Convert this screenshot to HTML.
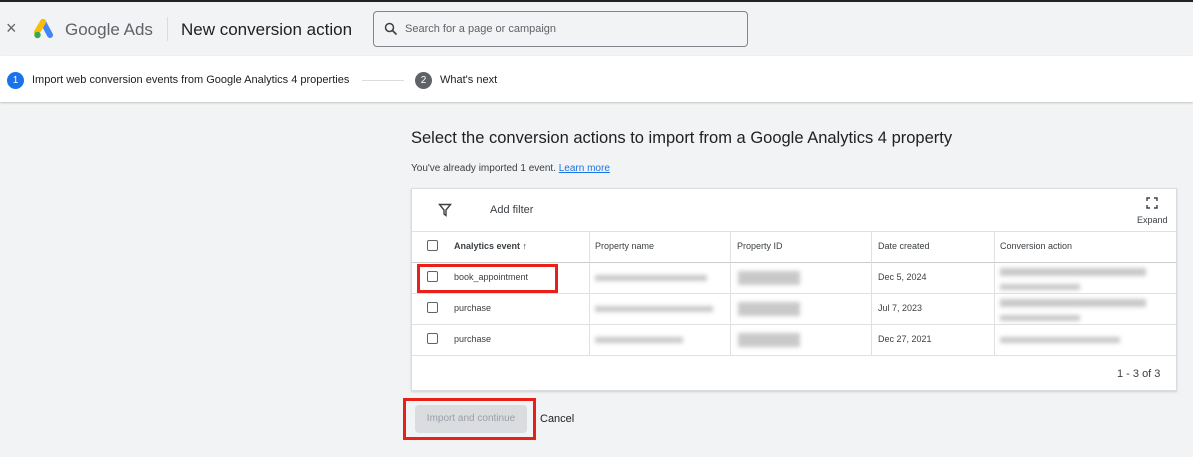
<!DOCTYPE html>
<html><head><meta charset="utf-8"><style>
*{box-sizing:border-box;margin:0;padding:0}
body{width:1193px;height:457px;overflow:hidden;background:#f1f3f4;font-family:"Liberation Sans",Arial,sans-serif;color:#202124;position:relative}
.a{position:absolute}
.top{left:0;top:0;width:1193px;height:2px;background:#222}
.step{left:0;top:56px;width:1193px;height:46px;background:#fff;box-shadow:0 1px 2px rgba(0,0,0,.2)}
.t{font-size:10px;color:#3c4043;white-space:nowrap}
.blur{background:#bbb;filter:blur(2px);height:6px;opacity:.8}
.cb{width:11px;height:11px;border:1.5px solid #5f6368;border-radius:2px}
.hl{background:#e0e0e0;height:1px}
.vl{background:#e0e0e0;width:1px}
</style></head><body>
<div class="a top"></div>
<div class="a" style="left:6px;top:18px;font-size:18px;color:#5f6368">×</div>
<svg class="a" style="left:33px;top:18px" width="22" height="22" viewBox="0 0 22 22"><path d="M10 4 L17 17" stroke="#4285f4" stroke-width="6" stroke-linecap="round"/><path d="M10 4 L4 14" stroke="#fbbc04" stroke-width="6" stroke-linecap="round"/><circle cx="4.5" cy="17" r="3.2" fill="#34a853"/></svg>
<div class="a" style="left:65px;top:20px;font-size:17px;color:#5f6368">Google Ads</div>
<div class="a" style="left:167px;top:17px;width:1px;height:24px;background:#dadce0"></div>
<div class="a" style="left:181px;top:20px;font-size:17px;color:#202124">New conversion action</div>
<div class="a" style="left:373px;top:11px;width:375px;height:36px;border:1px solid #80868b;border-radius:4px;background:#f1f3f4"></div>
<svg class="a" style="left:384px;top:22px" width="14" height="14" viewBox="0 0 14 14"><circle cx="5.5" cy="5.5" r="4" fill="none" stroke="#3c4043" stroke-width="1.5"/><path d="M8.5 8.5 L12.5 12.5" stroke="#3c4043" stroke-width="1.6"/></svg>
<div class="a t" style="left:405px;top:23px;font-size:11px;color:#5f6368">Search for a page or campaign</div>
<div class="a step"></div>
<div class="a" style="left:7px;top:72px;width:17px;height:17px;border-radius:50%;background:#1a73e8;color:#fff;font-size:10px;text-align:center;line-height:17px">1</div>
<div class="a t" style="left:32px;top:74px;color:#202124;font-size:11px">Import web conversion events from Google Analytics 4 properties</div>
<div class="a" style="left:362px;top:80px;width:42px;height:1px;background:#dadce0"></div>
<div class="a" style="left:415px;top:72px;width:17px;height:17px;border-radius:50%;background:#5f6368;color:#fff;font-size:10px;text-align:center;line-height:17px">2</div>
<div class="a t" style="left:440px;top:74px;color:#202124;font-size:11px">What's next</div>
<div class="a" style="left:411px;top:129px;font-size:16.5px;color:#202124">Select the conversion actions to import from a Google Analytics 4 property</div>
<div class="a t" style="left:411px;top:163px">You've already imported 1 event. <span style="color:#1a73e8;text-decoration:underline">Learn more</span></div>
<div class="a" style="left:411px;top:188px;width:766px;height:203px;background:#fff;border:1px solid #dadce0;box-shadow:0 1px 2px rgba(0,0,0,.15)"></div>
<svg class="a" style="left:438px;top:203px" width="14" height="14" viewBox="0 0 14 14"><path d="M1.5 1.5 H12.5 L8 7 V12.5 L6 11 V7 Z" fill="none" stroke="#3c4043" stroke-width="1.4"/></svg>
<div class="a t" style="left:490px;top:204px;font-size:11px">Add filter</div>
<svg class="a" style="left:1146px;top:197px" width="12" height="12" viewBox="0 0 12 12" fill="none" stroke="#3c4043" stroke-width="1.4"><path d="M1 4V1H4M8 1H11V4M11 8V11H8M4 11H1V8"/></svg>
<div class="a t" style="left:1137px;top:215px;font-size:9px">Expand</div>
<div class="a hl" style="left:412px;top:231px;width:764px"></div>
<div class="a hl" style="left:412px;top:262px;width:764px;background:#ccc"></div>
<div class="a hl" style="left:412px;top:293px;width:764px"></div>
<div class="a hl" style="left:412px;top:324px;width:764px"></div>
<div class="a hl" style="left:412px;top:355px;width:764px"></div>
<div class="a vl" style="left:589px;top:231px;height:124px"></div>
<div class="a vl" style="left:730px;top:231px;height:124px"></div>
<div class="a vl" style="left:871px;top:231px;height:124px"></div>
<div class="a vl" style="left:994px;top:231px;height:124px"></div>
<div class="a cb" style="left:427px;top:240px"></div>
<div class="a t" style="left:454px;top:241px;font-size:9px;font-weight:bold">Analytics event ↑</div>
<div class="a t" style="left:595px;top:241px;font-size:9px">Property name</div>
<div class="a t" style="left:737px;top:241px;font-size:9px">Property ID</div>
<div class="a t" style="left:878px;top:241px;font-size:9px">Date created</div>
<div class="a t" style="left:1000px;top:241px;font-size:9px">Conversion action</div>
<div class="a cb" style="left:427px;top:271px"></div><div class="a t" style="left:454px;top:272px;font-size:9px">book_appointment</div>
<div class="a cb" style="left:427px;top:302px"></div><div class="a t" style="left:454px;top:303px;font-size:9px">purchase</div>
<div class="a cb" style="left:427px;top:333px"></div><div class="a t" style="left:454px;top:334px;font-size:9px">purchase</div>
<div class="a t" style="left:878px;top:272px;font-size:9px">Dec 5, 2024</div>
<div class="a t" style="left:878px;top:303px;font-size:9px">Jul 7, 2023</div>
<div class="a t" style="left:878px;top:334px;font-size:9px">Dec 27, 2021</div>
<div class="a blur" style="left:595px;top:275px;width:112px"></div>
<div class="a blur" style="left:595px;top:306px;width:118px"></div>
<div class="a blur" style="left:595px;top:337px;width:88px"></div>
<div class="a blur" style="left:738px;top:271px;width:62px;height:14px"></div>
<div class="a blur" style="left:738px;top:302px;width:62px;height:14px"></div>
<div class="a blur" style="left:738px;top:333px;width:62px;height:14px"></div>
<div class="a blur" style="left:1000px;top:268px;width:146px;height:8px"></div>
<div class="a blur" style="left:1000px;top:284px;width:80px"></div>
<div class="a blur" style="left:1000px;top:299px;width:146px;height:8px"></div>
<div class="a blur" style="left:1000px;top:315px;width:80px"></div>
<div class="a blur" style="left:1000px;top:337px;width:120px"></div>
<div class="a t" style="left:1117px;top:368px;font-size:11px">1 - 3 of 3</div>
<div class="a" style="left:417px;top:264px;width:141px;height:29px;border:3px solid #e8201a"></div>
<div class="a" style="left:415px;top:405px;width:112px;height:28px;background:#dadce0;border-radius:4px;color:#9aa0a6;font-size:10px;text-align:center;line-height:28px">Import and continue</div>
<div class="a" style="left:403px;top:398px;width:133px;height:42px;border:3px solid #e8201a"></div>
<div class="a t" style="left:540px;top:413px;font-size:11px;color:#202124">Cancel</div>
</body></html>
